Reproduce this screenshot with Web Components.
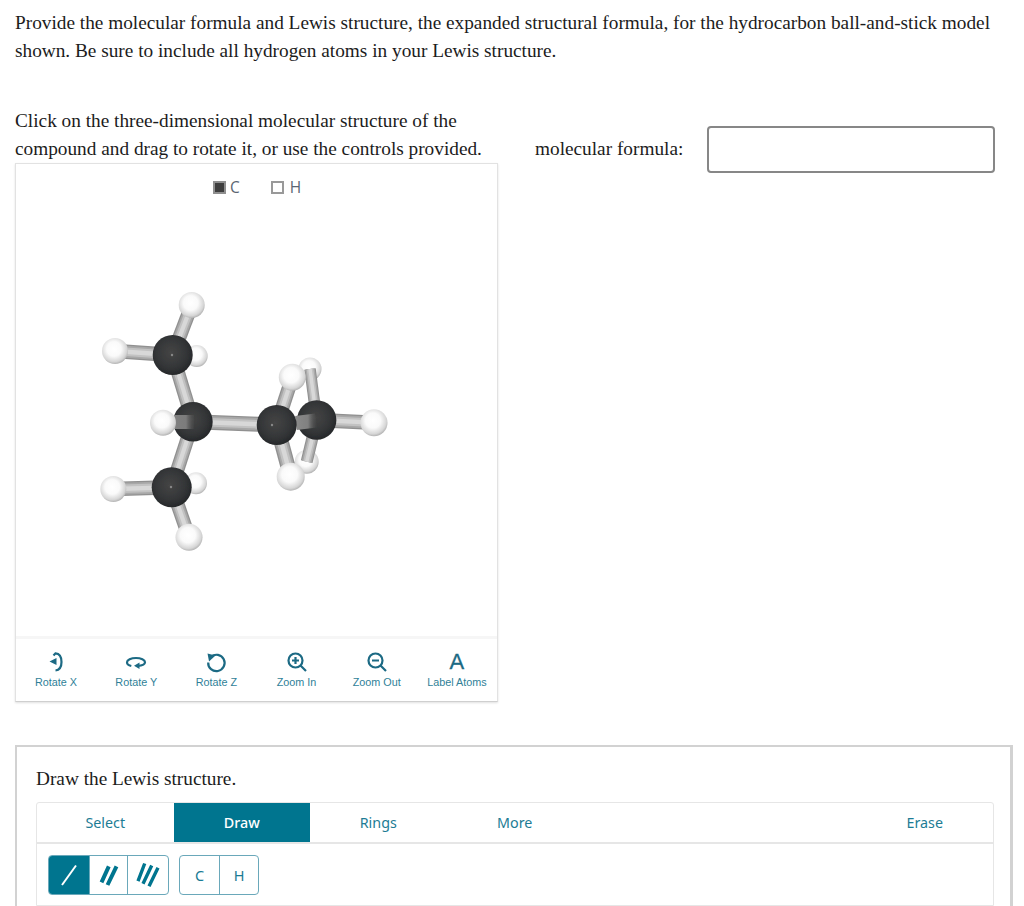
<!DOCTYPE html>
<html lang="en"><head><meta charset="utf-8"><title>Lewis structure</title>
<style>
html,body{margin:0;padding:0;height:906px;overflow:hidden;background:#fff}
body{font-family:"Liberation Serif",serif;color:#1c1c1c}
</style></head>
<body>
<question-page>
  <span slot="q">Provide the molecular formula and Lewis structure, the expanded structural formula, for the hydrocarbon ball-and-stick model shown. Be sure to include all hydrogen atoms in your Lewis structure.</span>
  <span slot="hint">Click on the three-dimensional molecular structure of the compound and drag to rotate it, or use the controls provided.</span>
  <molecule-viewer slot="viewer"></molecule-viewer>
  <formula-field slot="field">molecular formula:</formula-field>
  <lewis-panel slot="lewis"></lewis-panel>
</question-page>
<script>
function el(name,css,html){
  customElements.define(name,class extends HTMLElement{
    constructor(){super();this.attachShadow({mode:"open"}).innerHTML="<style>"+css+"</style>"+html;}
  });
}
el("question-page",`
:host{display:block;padding:9px 0 0 15px;width:1009px;box-sizing:border-box;font-size:19.3px;line-height:28px}
.q{margin:0;width:985px}
.mid{display:flex;margin-top:42px;align-items:flex-start}
.left{width:483px;flex:none}
.hint{margin:0;height:56px;width:482px}
.right{margin-left:37px}
.lw{margin-top:43px}
`,`<p class="q"><slot name="q"></slot></p>
<div class="mid"><div class="left"><p class="hint"><slot name="hint"></slot></p><slot name="viewer"></slot></div>
<div class="right"><slot name="field"></slot></div></div>
<div class="lw"><slot name="lewis"></slot></div>`);

el("formula-field",`
:host{display:flex;align-items:center;gap:24px;margin-top:19px;white-space:nowrap}
span{padding-bottom:2px}
.box{width:288px;height:47px;box-sizing:border-box;border:2px solid #878787;border-radius:4px;background:#fff}
`,`<span><slot></slot></span><div class="box"></div>`);

el("mol-legend",`
:host{display:flex;height:46px;box-sizing:border-box;padding-top:15px;padding-left:197px;font:15.500px/16px "Open Sans",sans-serif;color:#5b6673}
.s{width:13px;height:13px;box-sizing:border-box;border:2px solid #999;margin-right:4px;margin-top:2px}
.c{background:#3e3e3e;border-color:#8f8f8f}
.h{background:#fff;margin-left:31px;margin-right:6px}
`,`<div class="s c"></div><span>C</span><div class="s h"></div><span>H</span>`);

/* molecule drawing */
function stick(a,b,w){
  w=w||14.5;
  const l=(c,sw)=>`<line x1="${a[0]}" y1="${a[1]}" x2="${b[0]}" y2="${b[1]}" stroke="${c}" stroke-width="${sw}"/>`;
  return l("#909090",w)+l("#a8a8a8",w*.82)+l("#c2c2c2",w*.58)+l("#d8d8d8",w*.3);
}
function atom(p,r,id){return `<circle cx="${p[0]}" cy="${p[1]}" r="${r}" fill="url(#${id})"/>`;}
const CT=[172.7,355],CM=[193,421.7],C1=[276.7,425],C2=[316.7,420],CB=[171.7,487.3];
const svg=`<svg viewBox="16 210 480 426" width="480" height="426" xmlns="http://www.w3.org/2000/svg" role="img" aria-label="ball and stick model">
<defs>
<radialGradient id="hg" cx=".46" cy=".42" r=".62"><stop offset="0" stop-color="#fff"/><stop offset=".45" stop-color="#fafafa"/><stop offset=".8" stop-color="#d6d6d6"/><stop offset="1" stop-color="#a4a4a4"/></radialGradient>
<radialGradient id="cg" cx=".46" cy=".44" r=".62"><stop offset="0" stop-color="#454545"/><stop offset=".6" stop-color="#343638"/><stop offset="1" stop-color="#222426"/></radialGradient>
<linearGradient id="ov1" gradientUnits="userSpaceOnUse" x1="174" y1="0" x2="194" y2="0"><stop offset="0" stop-color="#808080"/><stop offset=".6" stop-color="#7c7c7c"/><stop offset="1" stop-color="#555" stop-opacity=".2"/></linearGradient>
<linearGradient id="ov2" gradientUnits="userSpaceOnUse" x1="296" y1="0" x2="316" y2="0"><stop offset="0" stop-color="#8a8a8a"/><stop offset=".6" stop-color="#808080"/><stop offset="1" stop-color="#555" stop-opacity=".2"/></linearGradient>
<filter id="soft" x="-5%" y="-5%" width="110%" height="110%"><feGaussianBlur stdDeviation=".6"/></filter>
</defs>
<g filter="url(#soft)">
${atom([196.7,356],11,"hg")}${atom([196,483.3],11,"hg")}
${atom([310,369],11.5,"hg")}${atom([306.7,461.7],12,"hg")}
${stick(C2,[310,369],11.5)}${stick(C2,[306.7,461.7],12)}
${stick(CT,[191.7,305],14)}${stick(CT,[115,351])}
${stick(CB,[113.3,489])}${stick(CB,[189,537.3],14)}
${stick(CT,CM,14)}${stick(CM,CB,14)}
${stick(CM,C1,15)}${stick(C2,[374,422.7],14.5)}
${atom(CT,20,"cg")}${atom(CB,20,"cg")}
${atom(C2,19.7,"cg")}
<line x1="296" y1="423" x2="316" y2="420.500" stroke="url(#ov2)" stroke-width="14"/>
${stick(C1,[292.3,377.3],14)}${stick(C1,[290.7,476.7],15)}
${atom(C1,20,"cg")}
${atom(CM,19.7,"cg")}
<line x1="174" y1="422" x2="194" y2="422" stroke="url(#ov1)" stroke-width="14"/>
<circle cx="172" cy="355" r="1.200" fill="#888"/><circle cx="171" cy="487" r="1.200" fill="#888"/><circle cx="272" cy="425" r="1.200" fill="#888"/>
${atom([191.7,305],13,"hg")}${atom([115,351],13,"hg")}${atom([113.3,489],13,"hg")}${atom([189,537.3],13.5,"hg")}
${atom([163,422.7],13,"hg")}${atom([374,422.7],13.5,"hg")}${atom([292.3,377.3],13.5,"hg")}${atom([290.7,476.7],14,"hg")}
</g></svg>`;
el("mol-model",`:host{display:block;height:426px}svg{display:block}`,svg);

el("tool-button",`
:host{display:flex;flex-direction:column;align-items:center;font:10.800px/13px "Liberation Sans",sans-serif;color:#2f7f98;white-space:nowrap}
.i{height:27px;display:flex;align-items:center;justify-content:center;margin-bottom:1px;color:#1c6a84}
`,`<div class="i"><slot name="i"></slot></div><slot></slot>`);

el("molecule-viewer",`
:host{display:block;width:483px;height:539px;box-sizing:border-box;border:1px solid #e2e2e2;border-bottom:1px solid #cfcfcf;box-shadow:0 1px 2px rgba(0,0,0,.12)}
.tools{display:grid;grid-template-columns:repeat(6,1fr);border-top:3px solid #f6f6f6;padding-top:9px}
svg{display:block;fill:none;stroke:#1c6a84;stroke-width:2.2}
span[slot=i].a{font:22px/24px "Liberation Sans",sans-serif;color:#1c6a84;-webkit-text-stroke:.3px #1c6a84}
`,`<mol-legend></mol-legend><mol-model></mol-model>
<div class="tools">
<tool-button><span slot="i"><svg width="24" height="24" viewBox="0 0 24 24"><path d="M9.500 5.500l2-2.200c4 .3 6 3.700 6 8.700c0 5-2.200 8-6 8.500"/><path d="M12.500 8v7L5.500 11.500z" fill="#1c6a84" stroke="none"/></svg></span>Rotate X</tool-button>
<tool-button><span slot="i"><svg width="24" height="24" viewBox="0 0 24 24"><path d="M7.300 16c-3-.7-4.300-2.300-4.300-3.800C3 10 7 8 12 8s9 2 9 4.200c0 1.800-3 3.300-7.500 3.800"/><path d="M15.500 12.500v6.500L10 15.800z" fill="#1c6a84" stroke="none"/></svg></span>Rotate Y</tool-button>
<tool-button><span slot="i"><svg width="24" height="24" viewBox="0 0 24 24"><path d="M7 6.800A8.200 8.200 0 1 1 4.200 12.500"/><path d="M3.500 3.500l8 2L5 11.500z" fill="#1c6a84" stroke="none"/></svg></span>Rotate Z</tool-button>
<tool-button><span slot="i"><svg width="24" height="24" viewBox="0 0 24 24"><circle cx="10.500" cy="10.500" r="7"/><path d="M15.500 15.500L21 21M7 10.500h7M10.500 7v7"/></svg></span>Zoom In</tool-button>
<tool-button><span slot="i"><svg width="24" height="24" viewBox="0 0 24 24"><circle cx="10.500" cy="10.500" r="7"/><path d="M15.500 15.500L21 21M7 10.500h7"/></svg></span>Zoom Out</tool-button>
<tool-button><span slot="i" class="a">A</span>Label Atoms</tool-button>
</div>`);

el("tab-item",`
:host{display:flex;align-items:center;justify-content:center;width:136.5px;color:#1d7c95;font:14.300px/21px "Noto Sans",sans-serif;box-sizing:border-box}
:host([on]){background:#00758f;color:#fff;font-weight:500}
:host([end]){margin-left:auto}
`,`<slot></slot>`);

el("seg-btn",`
:host{display:flex;align-items:center;justify-content:center;height:100%;box-sizing:border-box;color:#1a7b94;font:14.500px/16px "Noto Sans",sans-serif;border-left:1px solid #6aa8ba}
:host(:first-child){border-left:0}
:host([on]){background:#00758f;color:#fff}
svg{display:block}
`,`<slot></slot>`);

el("lewis-panel",`
:host{display:block;width:998px;height:300px;box-sizing:border-box;border:2px solid #d2d2d2;border-right-width:3px;padding:18px 18px 0 19px}
.t{height:37px;line-height:28px;margin:0}
.p{width:958px;height:104px;box-sizing:border-box;border:1px solid #e6e6e6;border-radius:3px 3px 0 0}
.tabs{display:flex;height:39px;border-bottom:2px solid #e6e6e6;box-sizing:content-box}
.row{display:flex;gap:10px;padding:11px 0 0 11px}
.g{display:grid;height:40px;box-sizing:border-box;border:1px solid #6aa8ba;border-radius:4px;overflow:hidden}
.b{grid-template-columns:40px 38px 41px;width:121px}
.a{grid-template-columns:39px 39px;width:80px}
svg{stroke:#00758f;fill:none}
`,`<p class="t">Draw the Lewis structure.</p>
<div class="p"><div class="tabs"><tab-item>Select</tab-item><tab-item on>Draw</tab-item><tab-item>Rings</tab-item><tab-item>More</tab-item><tab-item end>Erase</tab-item></div>
<div class="row">
<div class="g b">
<seg-btn on><svg width="20" height="24" viewBox="0 0 20 24"><path d="M17 2.500L3 22" stroke="#fff" stroke-width="2"/></svg></seg-btn>
<seg-btn><svg width="20" height="24" viewBox="0 0 20 24"><path d="M9.800 3.300L2.500 19.300M17.500 3.300L8.500 22" stroke-width="4"/></svg></seg-btn>
<seg-btn><svg width="24" height="26" viewBox="0 0 24 26"><path d="M8.700 1.500L2 19.200M15.700 3.500L7 21.800M22 5.800L13 24.200" stroke-width="3.400"/></svg></seg-btn>
</div>
<div class="g a"><seg-btn>C</seg-btn><seg-btn>H</seg-btn></div>
</div></div>`);
</script>
</body></html>
